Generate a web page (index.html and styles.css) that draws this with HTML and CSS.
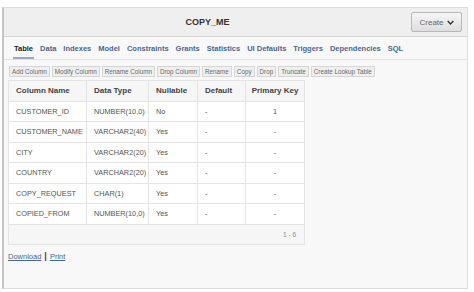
FILE: index.html
```html
<!DOCTYPE html>
<html lang="en">
<head>
    <meta charset="UTF-8">
    <link rel="stylesheet" href="styles.css">
    <title>COPY_ME</title>
</head>
<body>
    <div class="panel">
        <div class="panel-head">
            <h1 class="panel-title">COPY_ME</h1>
            <button class="create-btn">Create <svg class="chev" viewBox="0 0 10 6" width="7" height="5"><path d="M1 1 L5 5 L9 1" fill="none" stroke="#333" stroke-width="2"/></svg></button>
        </div>
        <div class="tabs">
            <a class="tab active">Table</a>
            <a class="tab">Data</a>
            <a class="tab">Indexes</a>
            <a class="tab">Model</a>
            <a class="tab">Constraints</a>
            <a class="tab">Grants</a>
            <a class="tab">Statistics</a>
            <a class="tab">UI Defaults</a>
            <a class="tab">Triggers</a>
            <a class="tab">Dependencies</a>
            <a class="tab">SQL</a>
        </div>
        <div class="panel-body">
            <div class="actions">
                <button class="act">Add Column</button>
                <button class="act">Modify Column</button>
                <button class="act">Rename Column</button>
                <button class="act">Drop Column</button>
                <button class="act">Rename</button>
                <button class="act">Copy</button>
                <button class="act">Drop</button>
                <button class="act">Truncate</button>
                <button class="act">Create Lookup Table</button>
            </div>
            <table class="cols">
                <thead>
                    <tr>
                        <th class="c1">Column Name</th>
                        <th class="c2">Data Type</th>
                        <th class="c3">Nullable</th>
                        <th class="c4">Default</th>
                        <th class="c5">Primary Key</th>
                    </tr>
                </thead>
                <tbody>
                    <tr><td>CUSTOMER_ID</td><td>NUMBER(10,0)</td><td>No</td><td>-</td><td class="mid">1</td></tr>
                    <tr><td>CUSTOMER_NAME</td><td>VARCHAR2(40)</td><td>Yes</td><td>-</td><td class="mid">-</td></tr>
                    <tr><td>CITY</td><td>VARCHAR2(20)</td><td>Yes</td><td>-</td><td class="mid">-</td></tr>
                    <tr><td>COUNTRY</td><td>VARCHAR2(20)</td><td>Yes</td><td>-</td><td class="mid">-</td></tr>
                    <tr><td>COPY_REQUEST</td><td>CHAR(1)</td><td>Yes</td><td>-</td><td class="mid">-</td></tr>
                    <tr><td>COPIED_FROM</td><td>NUMBER(10,0)</td><td>Yes</td><td>-</td><td class="mid">-</td></tr>
                </tbody>
                <tfoot>
                    <tr><td colspan="5" class="count">1 - 6</td></tr>
                </tfoot>
            </table>
            <div class="links">
                <a class="lnk">Download</a><span class="sep">|</span><a class="lnk">Print</a>
            </div>
        </div>
    </div>
</body>
</html>
```
FILE: styles.css
```css
*{
    margin: 0;
    padding: 0;
    box-sizing: border-box;
}
body{
    background: #fff;
    font-family: "Liberation Sans", Arial, sans-serif;
}
.panel{
    margin: 7px 0 0 2px;
    width: 466px;
    height: 282px;
    border: 1px solid #dcdcdc;
    border-left: 2px solid #c4c4c4;
    background: #f8f8f8;
}
.panel-head{
    display: flex;
    align-items: center;
    height: 29px;
    background: #efefef;
    border-bottom: 1px solid #d6d6d6;
    padding-right: 5px;
}
.panel-title{
    flex: 1;
    text-align: center;
    font-size: 9px;
    font-weight: bold;
    color: #333;
}
.create-btn{
    width: 51px;
    height: 20px;
    border: 1px solid #b8b8b8;
    border-radius: 2px;
    background: linear-gradient(#f6f6f6, #dedede);
    color: #666;
    font-family: inherit;
    font-size: 8px;
    display: flex;
    align-items: center;
    justify-content: center;
    gap: 3px;
}
.chev{
    display: block;
}
.tabs{
    display: flex;
    gap: 5px;
    height: 23px;
    padding: 0 9px;
    align-items: center;
    border-bottom: 1px solid #e2e2e2;
}
.tab{
    font-size: 7.5px;
    font-weight: bold;
    color: #4a6791;
    height: 100%;
    display: flex;
    align-items: center;
    padding: 1px 1px 0;
}
.tab.active{
    color: #222;
    box-shadow: inset 0 -2px 0 #9aa9bb;
}
.panel-body{
    padding: 6px 0 0 4px;
}
.actions{
    display: flex;
    gap: 2px;
    margin-bottom: 3px;
    padding-left: 1px;
}
.act{
    height: 11px;
    padding: 0 2px;
    border: 1px solid #d6d6d6;
    background: #efefef;
    color: #6a6a6a;
    font-family: inherit;
    font-size: 6.3px;
    line-height: 9px;
}
.cols{
    width: 297px;
    border-collapse: collapse;
    background: #fff;
    border: 1px solid #d8d8d8;
}
.cols th, .cols td{
    height: 20.5px;
    padding: 0 0 0 7px;
    text-align: left;
    border: 1px solid #e4e4e4;
    font-size: 7.3px;
    color: #555;
    white-space: nowrap;
}
.cols th{
    font-size: 8px;
    font-weight: bold;
    color: #444;
    background: #f6f6f6;
}
.c1{ width: 78px; }
.c2{ width: 62px; }
.c3{ width: 49px; }
.c4{ width: 48px; }
.cols th.c5, .cols td.mid{
    text-align: center;
    padding: 0;
}
.cols td.count{
    text-align: right;
    padding-right: 8px;
    background: #f6f6f6;
    color: #888;
    font-size: 6.5px;
}
.links{
    margin-top: 6px;
    font-size: 7.5px;
    display: flex;
    align-items: center;
}
.lnk{
    color: #4f6590;
    text-decoration: underline;
}
.sep{
    color: #444;
    font-weight: bold;
    padding: 0 3px;
    font-size: 9px;
}
```
